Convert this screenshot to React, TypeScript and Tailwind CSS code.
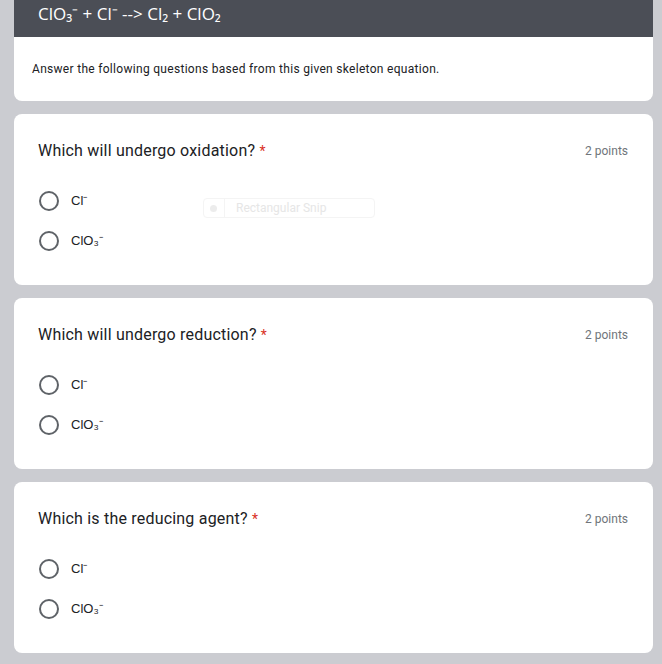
import React from "react";

const questions = [
  "Which will undergo oxidation?",
  "Which will undergo reduction?",
  "Which is the reducing agent?",
];

function Radio({ label }: { label: React.ReactNode }) {
  return (
    <div className="flex h-10 items-center">
      <span className="ml-[1px] h-5 w-5 rounded-full border-2 border-[#5f6368]" />
      <span className="ml-[12px] text-[13px] text-[#202124]" style={{ fontFamily: "'Liberation Sans', Arial, sans-serif" }}>
        {label}
      </span>
    </div>
  );
}

function QuestionCard({ title, snip }: { title: string; snip?: boolean }) {
  return (
    <div className="relative h-[171px] rounded-lg bg-white pl-[24px] pr-[25px]">
      <div className="flex items-center justify-between pt-[25px]">
        <div className="text-[16px] tracking-[0.2px] text-[#202124]">
          {title} <span className="text-[14px] text-[#d93025]">*</span>
        </div>
        <div className="text-[12px] text-[#70757a]">2 points</div>
      </div>
      <div className="mt-[18px]">
        <Radio label={<>Cl⁻</>} />
        <Radio label={<>ClO₃⁻</>} />
      </div>
      {snip && (
        <div className="absolute left-[189px] top-[84px] flex h-[20px] w-[172px] items-center rounded-sm border border-[#f4f4f4] text-[12px] text-[#e6e6e6]">
          <span className="ml-[6px] h-[7px] w-[7px] rounded-full bg-[#ececec]" />
          <span className="ml-[7px] h-full w-px bg-[#f4f4f4]" />
          <span className="ml-[11px]">Rectangular Snip</span>
        </div>
      )}
    </div>
  );
}

export default function App() {
  return (
    <div className="min-h-[664px] bg-[#cbccd1] pb-[12px] pl-[14px] pr-[9px]" style={{ fontFamily: "Roboto, 'Liberation Sans', sans-serif" }}>
      <div className="flex flex-col gap-[13px]">
        <div className="overflow-hidden rounded-b-lg bg-white">
          <div className="flex h-[37px] items-start bg-[#4b4e56] pl-[24px] pt-[1px] text-[17px] text-white" style={{ fontFamily: "'Open Sans', sans-serif" }}>
            ClO₃⁻ + Cl⁻ --&gt; Cl₂ + ClO₂
          </div>
          <div className="flex h-[64px] items-center pl-[18px] text-[12px] tracking-[0.3px] text-[#202124]">
            Answer the following questions based from this given skeleton equation.
          </div>
        </div>
        {questions.map((q, i) => (
          <QuestionCard key={q} title={q} snip={i === 0} />
        ))}
      </div>
    </div>
  );
}
